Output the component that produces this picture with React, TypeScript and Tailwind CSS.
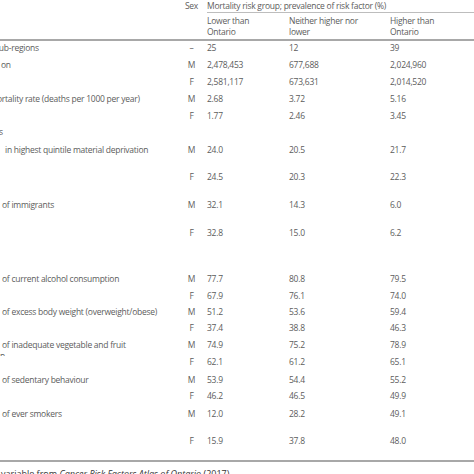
const rows = [
  { label: 'sub-regions', lx: '-ml-[5px]', sex: '–', v: ['25', '12', '39'], h: 'h-[17px]' },
  { label: 'on', lx: 'ml-[1px]', sex: 'M', v: ['2,478,453', '677,688', '2,024,960'], h: 'h-[17px]' },
  { label: '', lx: '', sex: 'F', v: ['2,581,117', '673,631', '2,014,520'], h: 'h-[17px]' },
  { label: 'ortality rate (deaths per 1000 per year)', lx: '-ml-[3px]', sex: 'M', v: ['2.68', '3.72', '5.16'], h: 'h-[17px]' },
  { label: '', lx: '', sex: 'F', v: ['1.77', '2.46', '3.45'], h: 'h-[16px]' },
  { label: 's', lx: '-ml-[1px]', sex: '', v: ['', '', ''], h: 'h-[18px]' },
  { label: 'in highest quintile material deprivation', lx: 'ml-[5px]', sex: 'M', v: ['24.0', '20.5', '21.7'], h: 'h-[27px]' },
  { label: '', lx: '', sex: 'F', v: ['24.5', '20.3', '22.3'], h: 'h-[28px]' },
  { label: 'of immigrants', lx: 'ml-[2px]', sex: 'M', v: ['32.1', '14.3', '6.0'], h: 'h-[28px]' },
  { label: '', lx: '', sex: 'F', v: ['32.8', '15.0', '6.2'], h: 'h-[46px]' },
  { label: 'of current alcohol consumption', lx: 'ml-[2px]', sex: 'M', v: ['77.7', '80.8', '79.5'], h: 'h-[17px]' },
  { label: '', lx: '', sex: 'F', v: ['67.9', '76.1', '74.0'], h: 'h-[16px]' },
  { label: 'of excess body weight (overweight/obese)', lx: 'ml-[2px]', sex: 'M', v: ['51.2', '53.6', '59.4'], h: 'h-[16px]' },
  { label: '', lx: '', sex: 'F', v: ['37.4', '38.8', '46.3'], h: 'h-[17px]' },
  { label: 'of inadequate vegetable and fruit', label2: 'n', lx: 'ml-[2px]', sex: 'M', v: ['74.9', '75.2', '78.9'], h: 'h-[17px]' },
  { label: '', lx: '', sex: 'F', v: ['62.1', '61.2', '65.1'], h: 'h-[18px]' },
  { label: 'of sedentary behaviour', lx: 'ml-[2px]', sex: 'M', v: ['53.9', '54.4', '55.2'], h: 'h-[16px]' },
  { label: '', lx: '', sex: 'F', v: ['46.2', '46.5', '49.9'], h: 'h-[18px]' },
  { label: 'of ever smokers', lx: 'ml-[2px]', sex: 'M', v: ['12.0', '28.2', '49.1'], h: 'h-[27px]' },
  { label: '', lx: '', sex: 'F', v: ['15.9', '37.8', '48.0'], h: 'h-[25px]' },
]

const cols = 'grid grid-cols-[182px_19px_88px_101px_1fr]'

export default function App() {
  return (
    <div className="w-[474px] h-[474px] overflow-hidden bg-white text-[8.5px] leading-[10px] tracking-[-0.25px] text-[#5c5c5c] font-['Open_Sans',sans-serif]">
      {/* Header */}
      <div className="pt-[1px]">
        <div className={`${cols} h-[10px]`}>
          <div />
          <div className="text-center">Sex</div>
          <div className="col-span-3 pl-[6px] whitespace-nowrap">
            Mortality risk group; prevalence of risk factor (%)
          </div>
        </div>
        <div className="mt-[1px] ml-[207px] h-px bg-[#bdbdbd]" />
        <div className={`${cols} mt-[2px] h-[22px] leading-[11px]`}>
          <div />
          <div />
          <div className="pl-[6px]">
            Lower than
            <br />
            Ontario
          </div>
          <div>
            Neither higher nor
            <br />
            lower
          </div>
          <div>
            Higher than
            <br />
            Ontario
          </div>
        </div>
        <div className="mt-[2px] h-[2px] bg-[#a8a8a8]" />
      </div>

      {/* Body */}
      <div className="pt-[1px]">
        {rows.map((r, i) => (
          <div key={i} className={`${cols} ${r.h} pt-[0.5px]`}>
            <div className="overflow-hidden whitespace-nowrap">
              <div className={r.lx}>{r.label}</div>
              {r.label2 && <div className="mt-[1px]">{r.label2}</div>}
            </div>
            <div className="text-center">{r.sex}</div>
            <div className="pl-[6px]">{r.v[0]}</div>
            <div>{r.v[1]}</div>
            <div>{r.v[2]}</div>
          </div>
        ))}
      </div>
      <div className="h-[2px] bg-[#a8a8a8]" />

      {/* Footnote */}
      <div className="mt-[6px] ml-[1px] whitespace-nowrap text-[9px] leading-[11px] tracking-normal text-[#333]">
        variable from <span className="italic">Cancer Risk Factors Atlas of Ontario</span> (2017)
      </div>
    </div>
  )
}
